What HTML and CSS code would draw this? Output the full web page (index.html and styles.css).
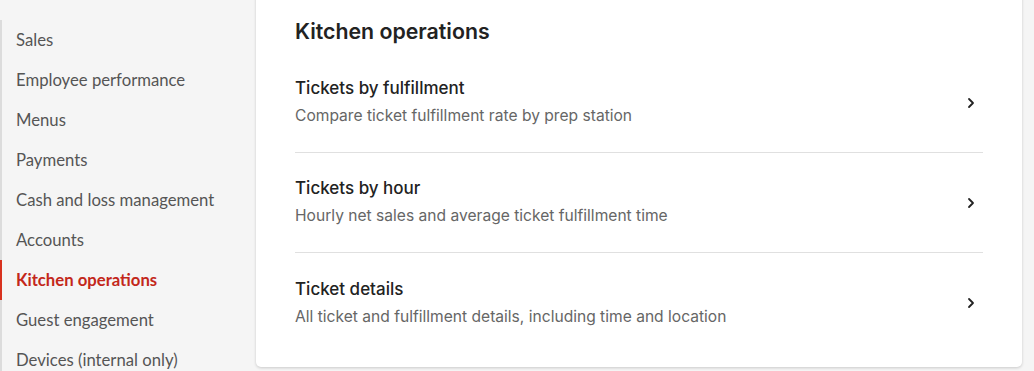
FILE: index.html
```html
<!DOCTYPE html>
<html>
<head>
<meta charset="utf-8">
<link rel="stylesheet" href="styles.css">
</head>
<body>
<div class="page">
  <nav class="sidebar">
    <ul class="nav-list">
      <li class="nav-item">Sales</li>
      <li class="nav-item">Employee performance</li>
      <li class="nav-item">Menus</li>
      <li class="nav-item">Payments</li>
      <li class="nav-item">Cash and loss management</li>
      <li class="nav-item">Accounts</li>
      <li class="nav-item active">Kitchen operations</li>
      <li class="nav-item">Guest engagement</li>
      <li class="nav-item">Devices (internal only)</li>
    </ul>
  </nav>
  <main class="card">
    <h1 class="card-title">Kitchen operations</h1>
    <ul class="rows">
      <li class="row">
        <div class="row-text">
          <div class="row-title">Tickets by fulfillment</div>
          <div class="row-sub">Compare ticket fulfillment rate by prep station</div>
        </div>
        <svg class="chev" width="10" height="12" viewBox="0 0 10 12"><path d="M3 2 L7 6 L3 10" fill="none" stroke="#222" stroke-width="1.8" stroke-linecap="round" stroke-linejoin="round"/></svg>
      </li>
      <li class="row">
        <div class="row-text">
          <div class="row-title">Tickets by hour</div>
          <div class="row-sub">Hourly net sales and average ticket fulfillment time</div>
        </div>
        <svg class="chev" width="10" height="12" viewBox="0 0 10 12"><path d="M3 2 L7 6 L3 10" fill="none" stroke="#222" stroke-width="1.8" stroke-linecap="round" stroke-linejoin="round"/></svg>
      </li>
      <li class="row">
        <div class="row-text">
          <div class="row-title">Ticket details</div>
          <div class="row-sub">All ticket and fulfillment details, including time and location</div>
        </div>
        <svg class="chev" width="10" height="12" viewBox="0 0 10 12"><path d="M3 2 L7 6 L3 10" fill="none" stroke="#222" stroke-width="1.8" stroke-linecap="round" stroke-linejoin="round"/></svg>
      </li>
    </ul>
  </main>
</div>
</body>
</html>
```
FILE: styles.css
```css
html, body {
  margin: 0;
  padding: 0;
  background: #f5f5f5;
  overflow: hidden;
}
.page {
  display: flex;
  align-items: flex-start;
  height: 371px;
}
.sidebar {
  width: 256px;
  flex: none;
  padding-top: 20px;
}
.nav-list {
  list-style: none;
  margin: 0;
  padding: 0;
  border-left: 2px solid #dcdcdc;
}
.nav-item {
  height: 40px;
  line-height: 40px;
  padding-left: 14px;
  margin-left: -2px;
  border-left: 2px solid transparent;
  font-family: "Lato", "Noto Sans", sans-serif;
  font-size: 16.7px;
  color: #555;
  white-space: nowrap;
}
.nav-item.active {
  border-left-color: #d8321f;
  color: #c3271a;
  font-weight: 700;
}
.card {
  flex: 1;
  margin: -8px 12px 0 0;
  padding: 18px 39px 14px;
  background: #fff;
  border-radius: 0 0 5px 5px;
  box-shadow: 0 1px 3px rgba(0,0,0,0.18);
  font-family: "Inter", "Noto Sans", sans-serif;
}
.card-title {
  margin: 0;
  height: 43px;
  line-height: 43px;
  font-size: 21.3px;
  font-weight: 600;
  color: #222;
}
.rows {
  list-style: none;
  margin: 0;
  padding: 0;
}
.row {
  height: 100px;
  display: flex;
  align-items: center;
  justify-content: space-between;
  border-bottom: 1px solid #e0e0e0;
  box-sizing: border-box;
}
.row:last-child {
  border-bottom: none;
}
.row-text {
  padding-bottom: 3px;
}
.row-title {
  font-size: 17px;
  font-weight: 500;
  color: #222;
  line-height: 24px;
}
.row-sub {
  margin-top: 6px;
  font-size: 15.6px;
  color: #666;
  line-height: 20px;
}
.chev {
  margin-right: 7px;
}
```
